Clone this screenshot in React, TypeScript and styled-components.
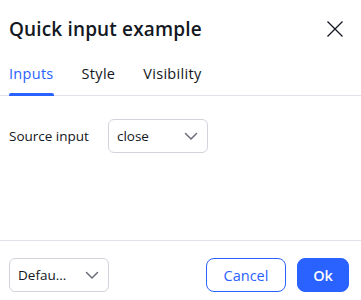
import React, { useState } from "react";
import styled, { createGlobalStyle } from "styled-components";

const GlobalStyle = createGlobalStyle`
  html, body {
    margin: 0;
    padding: 0;
    background: #ffffff;
  }
  body {
    font-family: "Open Sans", "Noto Sans", Arial, sans-serif;
    color: #131722;
  }
`;

const Dialog = styled.div`
  width: 361px;
  height: 300px;
  display: flex;
  flex-direction: column;
  background: #ffffff;
  box-sizing: border-box;
`;

const Header = styled.header`
  display: flex;
  align-items: center;
  justify-content: space-between;
  height: 58px;
  padding: 0 16px 0 9px;
`;

const Title = styled.h1`
  margin: 0;
  font-size: 19px;
  font-weight: 600;
  letter-spacing: 0.15px;
  color: #131722;
`;

const CloseButton = styled.button`
  width: 20px;
  height: 20px;
  padding: 0;
  border: none;
  background: none;
  display: flex;
  align-items: center;
  justify-content: center;
  cursor: pointer;
`;

const Tabs = styled.nav`
  display: flex;
  gap: 28px;
  padding: 0 9px;
  border-bottom: 1px solid #e0e3eb;
`;

const Tab = styled.button<{ active?: boolean }>`
  position: relative;
  padding: 6px 0 12px;
  border: none;
  background: none;
  font-family: inherit;
  font-size: 14.5px;
  letter-spacing: 0.3px;
  color: ${(p) => (p.active ? "#2962ff" : "#131722")};
  cursor: pointer;
  &::after {
    content: "";
    position: absolute;
    left: 0;
    right: 0;
    bottom: -1px;
    height: 3px;
    border-radius: 2px 2px 0 0;
    background: ${(p) => (p.active ? "#2962ff" : "transparent")};
  }
`;

const Body = styled.section`
  flex: 1;
  padding: 23px 9px 0;
`;

const Row = styled.div`
  display: flex;
  align-items: center;
  gap: 19px;
`;

const Label = styled.label`
  font-size: 13.5px;
  color: #131722;
`;

const Select = styled.div<{ width: number }>`
  width: ${(p) => p.width}px;
  height: 34px;
  box-sizing: border-box;
  border: 1px solid #d1d4dc;
  border-radius: 6px;
  display: flex;
  align-items: center;
  justify-content: space-between;
  padding: 0 7px 0 8px;
  font-size: 13.5px;
  color: #131722;
`;

const Footer = styled.footer`
  display: flex;
  align-items: flex-start;
  justify-content: space-between;
  height: 60px;
  box-sizing: border-box;
  padding: 17px 12px 0 9px;
  border-top: 1px solid #e0e3eb;
`;

const Buttons = styled.div`
  display: flex;
  gap: 11px;
`;

const Button = styled.button<{ primary?: boolean }>`
  height: 34px;
  width: ${(p) => (p.primary ? "52px" : "80px")};
  padding: 0;
  box-sizing: border-box;
  border-radius: 8px;
  font-family: inherit;
  font-size: 14.5px;
  font-weight: ${(p) => (p.primary ? 600 : 400)};
  border: 1px solid #2962ff;
  background: ${(p) => (p.primary ? "#2962ff" : "#ffffff")};
  color: ${(p) => (p.primary ? "#ffffff" : "#2962ff")};
  cursor: pointer;
`;

const Chevron = () => (
  <svg width="18" height="18" viewBox="0 0 18 18" fill="none">
    <path d="M3.5 6.5 9 12l5.5-5.5" stroke="#6a6d78" strokeWidth="1.5" strokeLinecap="round" />
  </svg>
);

const CloseIcon = () => (
  <svg width="18" height="18" viewBox="0 0 18 18" fill="none">
    <path d="M1.5 1.5l15 15M16.5 1.5l-15 15" stroke="#131722" strokeWidth="1.3" />
  </svg>
);

const App: React.FC = () => {
  const [tab, setTab] = useState("Inputs");
  const tabs = ["Inputs", "Style", "Visibility"];

  return (
    <>
      <GlobalStyle />
      <Dialog>
        <Header>
          <Title>Quick input example</Title>
          <CloseButton aria-label="Close">
            <CloseIcon />
          </CloseButton>
        </Header>
        <Tabs>
          {tabs.map((t) => (
            <Tab key={t} active={tab === t} onClick={() => setTab(t)}>
              {t}
            </Tab>
          ))}
        </Tabs>
        <Body>
          <Row>
            <Label>Source input</Label>
            <Select width={100}>
              close
              <Chevron />
            </Select>
          </Row>
        </Body>
        <Footer>
          <Select width={100}>
            Defau...
            <Chevron />
          </Select>
          <Buttons>
            <Button>Cancel</Button>
            <Button primary>Ok</Button>
          </Buttons>
        </Footer>
      </Dialog>
    </>
  );
};

export default App;
